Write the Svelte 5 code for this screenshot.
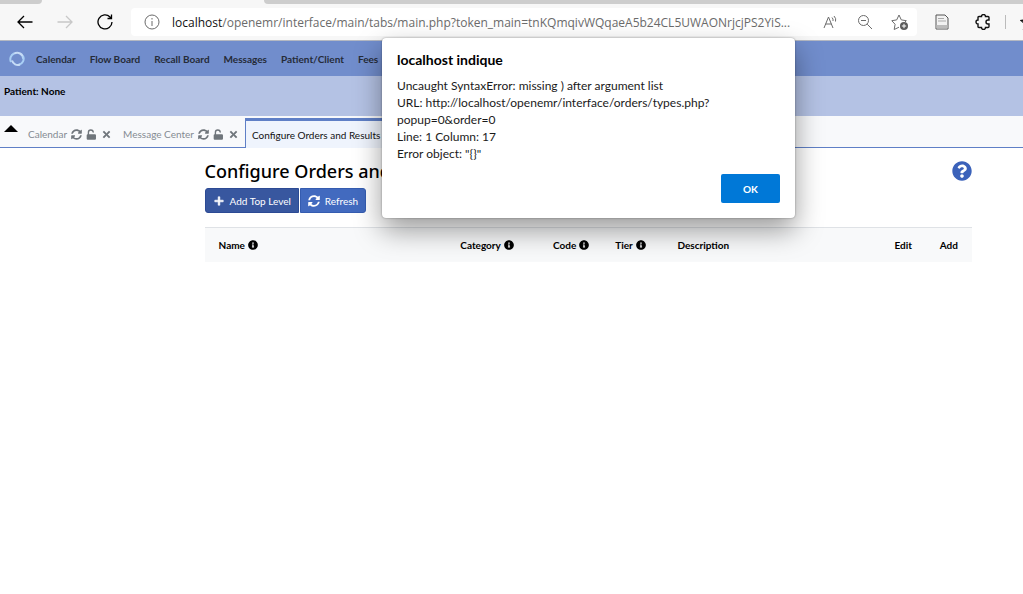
<script lang="ts">
    const menu = ['Calendar', 'Flow Board', 'Recall Board', 'Messages', 'Patient/Client', 'Fees'];

    const columns = [
        { title: 'Name', info: true, width: 31.5 },
        { title: 'Category', info: true, width: 12.1 },
        { title: 'Code', info: true, width: 8.1 },
        { title: 'Tier', info: true, width: 8.1 },
        { title: 'Description', info: false, width: 28.3 },
        { title: 'Edit', info: false, width: 5.9 },
        { title: 'Add', info: false, width: 6 }
    ];

    let tabs = $state([
        { title: 'Calendar', active: false },
        { title: 'Message Center', active: false },
        { title: 'Configure Orders and Results', active: true }
    ]);

    let showAlert = $state(true);

    function closeTab(title: string) {
        tabs = tabs.filter((t) => t.title !== title);
    }
</script>

{#snippet sync()}
    <svg class="fa" viewBox="0 0 512 512" aria-hidden="true"><path d="M370.72 133.28C339.458 104.008 298.888 87.962 255.848 88c-77.458.068-144.328 53.178-162.791 126.85-1.344 5.363-6.122 9.15-11.651 9.15H24.103c-7.498 0-13.194-6.807-11.807-14.176C33.933 94.924 134.813 8 256 8c66.448 0 126.791 26.136 171.315 68.685L463.03 40.97C478.149 25.851 504 36.559 504 57.941V192c0 13.255-10.745 24-24 24H345.941c-21.382 0-32.09-25.851-16.971-40.971l41.75-41.749zM32 296h134.059c21.382 0 32.09 25.851 16.971 40.971l-41.75 41.75c31.262 29.273 71.835 45.319 114.876 45.28 77.418-.07 144.315-53.144 162.787-126.849 1.344-5.363 6.122-9.15 11.651-9.15h57.304c7.498 0 13.194 6.807 11.807 14.176C478.067 417.076 377.187 504 256 504c-66.448 0-126.791-26.136-171.315-68.685L48.97 471.03C33.851 486.149 8 475.441 8 454.059V320c0-13.255 10.745-24 24-24z" /></svg>
{/snippet}

{#snippet info()}
    <svg class="fa info" viewBox="0 0 512 512" aria-hidden="true"><path d="M256 8C119.043 8 8 119.083 8 256c0 136.997 111.043 248 248 248s248-111.003 248-248C504 119.083 392.957 8 256 8zm0 110c23.196 0 42 18.804 42 42s-18.804 42-42 42-42-18.804-42-42 18.804-42 42-42zm56 254c0 6.627-5.373 12-12 12h-88c-6.627 0-12-5.373-12-12v-24c0-6.627 5.373-12 12-12h12v-64h-12c-6.627 0-12-5.373-12-12v-24c0-6.627 5.373-12 12-12h64c6.627 0 12 5.373 12 12v100h12c6.627 0 12 5.373 12 12v24z" /></svg>
{/snippet}

<div class="strip"><span class="strip-tab"></span><span class="strip-active"></span><span class="strip-rest"></span></div>

<header class="toolbar">
    <div class="nav-buttons">
        <button aria-label="Back"><svg width="16" height="16" viewBox="0 0 16 16"><path d="M15.500 8H1M7 2 1 8l6 6" /></svg></button>
        <button aria-label="Forward" disabled><svg width="16" height="16" viewBox="0 0 16 16"><path d="M.5 8H15M9 2l6 6-6 6" /></svg></button>
        <button aria-label="Reload"><svg width="16" height="16" viewBox="0 0 16 16"><path d="M15 8a7 7 0 1 1-2-5l1.500 1.500M14.500.5v4h-4" /></svg></button>
    </div>
    <div class="address">
        <svg width="16" height="16" viewBox="0 0 16 16"><circle cx="8" cy="8" r="7" /><path d="M8 7v5M8 4v1.500" /></svg>
        <a class="url" href="#main"><b>localhost</b>/openemr/interface/main/tabs/main.php?token_main=tnKQmqivWQqaeA5b24CL5UWAONrjcjPS2YiS...</a>
        <button aria-label="Read aloud"><svg width="16" height="16" viewBox="0 0 16 16"><path d="M1 14 5.500 3 10 14M2.600 10h5.800M9 3.500q1.500 1.500 1 3.500M11 2q2.500 2.500 1.500 5.500" /></svg></button>
        <button aria-label="Zoom out"><svg width="16" height="16" viewBox="0 0 16 16"><circle cx="6.500" cy="6.500" r="5" /><path d="M4 6.500h5M10.200 10.200 15 15" /></svg></button>
        <button aria-label="Add to favourites"><svg width="18" height="18" viewBox="0 0 18 18"><path d="M8 14.200 3.200 16.500l.9-5.200L.8 7.700l4.900-.8L8 2l2.300 4.900 5 .8-1.500 1.500" /><circle class="solid" cx="13" cy="13" r="4" /><path class="light" d="M13 10.800v4.400M10.800 13h4.400" /></svg></button>
    </div>
    <div class="extras">
        <button aria-label="Page extension"><svg width="16" height="16" viewBox="0 0 16 16"><path class="page" d="M2 1h9l3 3v11H2z" /><path class="line" d="M4 4.500h6M4 7h8" /><path class="band" d="M2.500 11h11v3.500h-11z" /></svg></button>
        <button class="puzzle" aria-label="Extensions"><svg width="16" height="16" viewBox="0 0 16 16"><path d="M4 2.500h2.500a2 2 0 0 1 4 0H13q1 0 1 1V6h-1a2 2 0 0 0 0 4h1v2.500q0 1-1 1h-2.500a2 2 0 0 1-4 0H4q-1 0-1-1V10a2 2 0 0 1 0-4V3.500q0-1 1-1z" /></svg></button>
        <span class="rule"></span>
        <button class="puzzle" aria-label="Favourites"><svg width="16" height="16" viewBox="0 0 16 16"><path d="M8 1.500 10 6l5 .5-4 3.300 1.200 4.900L8 12l-4.200 2.700L5 9.800 1 6.500 6 6z" /></svg></button>
    </div>
</header>

<nav class="menu">
    <svg class="logo" width="16" height="16" viewBox="0 0 16 16" aria-hidden="true">
        <path class="arc-one" d="M2 11A6.200 6.200 0 0 1 5 2.500" />
        <path class="arc-two" d="M5 2.700a6 6 0 0 1 9.200 5" />
        <path class="arc-one" d="M14 5a6.200 6.200 0 0 1-4 8.700" />
        <path class="arc-two" d="M3 9.500a6 6 0 0 0 8 4" />
    </svg>
    {#each menu as item}
        <a href="#menu">{item}</a>
    {/each}
</nav>

<section class="patient">Patient: None</section>

<div class="tabs">
    <button class="collapse" aria-label="Collapse patient bar"></button>
    {#each tabs as tab}
        <div class="tab" class:active={tab.active}>
            <a href="#tab">{tab.title}</a>
            <button aria-label="Refresh {tab.title}">{@render sync()}</button>
            <button aria-label="Lock {tab.title}"><svg class="fa" viewBox="0 0 512 512" aria-hidden="true"><path d="M80 240V160a144 144 0 0 1 288-6c0 30-64 30-64 0a80 80 0 0 0-160 6v80h272a48 48 0 0 1 48 48v160a48 48 0 0 1-48 48H80a48 48 0 0 1-48-48V288a48 48 0 0 1 48-48z" /></svg></button>
            <button aria-label="Close {tab.title}" onclick={() => closeTab(tab.title)}><svg class="fa" viewBox="0 0 512 512" aria-hidden="true"><path d="m140 90 116 116L372 90l50 50-116 116 116 116-50 50-116-116-116 116-50-50 116-116L90 140z" stroke="currentColor" stroke-width="24" /></svg></button>
        </div>
    {/each}
</div>

<main id="main">
    <div class="title">
        <h1>Configure Orders and Results</h1>
        <a class="help" href="#help" aria-label="Help"><svg viewBox="0 0 512 512" width="20" height="20"><path d="M504 256c0 136.997-111.043 248-248 248S8 392.997 8 256C8 119.083 119.043 8 256 8s248 111.083 248 248zM262.655 90c-54.497 0-89.255 22.957-116.549 63.758-3.536 5.286-2.353 12.415 2.715 16.258l34.699 26.31c5.205 3.947 12.621 3.008 16.665-2.122 17.864-22.658 30.113-35.797 57.303-35.797 20.429 0 45.698 13.148 45.698 32.958 0 14.976-12.363 22.667-32.534 33.976C247.128 238.528 216 254.941 216 296v4c0 6.627 5.373 12 12 12h56c6.627 0 12-5.373 12-12v-1.333c0-28.462 83.186-29.647 83.186-106.667 0-58.002-60.165-102-116.531-102zM256 338c-25.365 0-46 20.635-46 46 0 25.364 20.635 46 46 46s46-20.636 46-46c0-25.365-20.635-46-46-46z" /></svg></a>
    </div>
    <div class="actions">
        <button class="pressed"><svg class="fa" viewBox="0 0 512 512" aria-hidden="true"><path d="M220 76h72v144h144v72H292v144h-72V292H76v-72h144z" stroke="currentColor" stroke-width="24" stroke-linejoin="round" /></svg>Add Top Level</button>
        <button>{@render sync()}Refresh</button>
    </div>
    <table>
        <colgroup>
            {#each columns as col}
                <col style="width: {col.width}%" />
            {/each}
        </colgroup>
        <thead>
            <tr>
                {#each columns as col}
                    <th scope="col">{col.title}{#if col.info}{@render info()}{/if}</th>
                {/each}
            </tr>
        </thead>
    </table>
</main>

{#if showAlert}
    <div class="alert" role="alertdialog" aria-labelledby="alert-title" aria-describedby="alert-text">
        <h2 id="alert-title">localhost indique</h2>
        <p id="alert-text">Uncaught SyntaxError: missing ) after argument list<br />URL: http://localhost/openemr/interface/orders/types.php?<br />popup=0&amp;order=0<br />Line: 1 Column: 17<br />Error object: "{'{}'}"</p>
        <button onclick={() => (showAlert = false)}>OK</button>
    </div>
{/if}

<style>
    :global(body) {
        background: #fff;
        color: #000;
        font-family: "Segoe UI", Lato, "Open Sans", sans-serif;
        font-size: 10px;
        overflow-x: hidden;
    }
    button {
        border: 0;
        padding: 0;
        background: none;
        color: inherit;
        font: inherit;
        display: flex;
        align-items: center;
    }
    a {
        color: inherit;
        text-decoration: none;
    }
    svg {
        flex: none;
        display: block;
    }
    .fa {
        width: 12px;
        height: 12px;
        fill: currentColor;
    }

    /* browser chrome */
    .strip {
        display: flex;
        height: 4px;
        background: #f7f7f7;
    }
    .strip-tab {
        width: 42px;
        background: #cdcdcd;
        border-radius: 0 0 4px 0;
    }
    .strip-active {
        width: 222px;
    }
    .strip-rest {
        flex: 1;
        background: #cdcdcd;
        border-radius: 0 0 0 4px;
    }
    .toolbar {
        display: flex;
        align-items: center;
        height: 36px;
        background: #f7f7f7;
        border-bottom: 1px solid #b4b8c2;
        overflow: hidden;
    }
    .toolbar svg {
        fill: none;
        stroke: currentColor;
    }
    .nav-buttons {
        display: flex;
        gap: 24px;
        padding: 0 18px 0 17px;
    }
    .nav-buttons svg {
        stroke-width: 1.3;
    }
    .nav-buttons button:disabled {
        color: #c8c8c8;
    }
    .address {
        flex: 1;
        min-width: 0;
        display: flex;
        align-items: center;
        gap: 18px;
        height: 28px;
        padding: 0 8px 0 13px;
        background: #fff;
        border-radius: 4px;
        color: #6b6b6b;
    }
    .url {
        flex: 1;
        min-width: 0;
        margin-left: -6px;
        overflow: hidden;
        white-space: nowrap;
        font-family: "Segoe UI", "Open Sans", sans-serif;
        font-size: 12px;
    }
    .url b {
        color: #111;
        font-weight: 400;
    }
    .address .solid {
        fill: #5a5a5a;
        stroke: none;
    }
    .address .light {
        stroke: #fff;
    }
    .extras {
        display: flex;
        align-items: center;
        width: 89px;
        margin-left: 17px;
        gap: 25px;
        color: #555;
    }
    .extras .page {
        fill: #f2f2f2;
    }
    .extras .line {
        stroke: #aaa;
    }
    .extras .band {
        fill: #bbb;
        stroke: none;
    }
    .puzzle {
        color: #111;
    }
    .puzzle svg {
        stroke-width: 1.4;
    }
    .rule {
        flex: none;
        width: 1px;
        height: 14px;
        margin: 0 -11px;
        background: #bbb;
    }

    /* application */
    .menu {
        display: flex;
        align-items: center;
        gap: 14px;
        height: 35px;
        padding-left: 9px;
        background: #718dcc;
        color: #252b38;
        font-weight: 700;
    }
    .logo {
        margin-right: -3px;
        fill: none;
        stroke-width: 2;
    }
    .arc-one {
        stroke: #a9cff5;
    }
    .arc-two {
        stroke: #c6dcf6;
    }
    .patient {
        height: 40px;
        padding: 8px 4px 0;
        box-sizing: border-box;
        background: #b4c2e4;
        font-weight: 700;
        line-height: 14px;
    }
    .tabs {
        display: flex;
        align-items: stretch;
        height: 32px;
        background: #f8f9fb;
        box-shadow: inset 0 -1px #5f7fc6;
    }
    .collapse {
        width: 0;
        height: 0;
        margin: 9px 5px 0 4px;
        border: 7px solid transparent;
        border-top: 0;
        border-bottom-color: #000;
    }
    .tab {
        display: flex;
        align-items: center;
        gap: 4px;
        padding: 4px 6px 0 5px;
        color: #858b92;
        white-space: nowrap;
    }
    .tab .fa {
        width: 11px;
        height: 11px;
        color: #6f757b;
    }
    .tab.active {
        padding: 0 6px;
        margin-top: 2px;
        border-top: 3px solid #5f7fc6;
        border-left: 1px solid #5f7fc6;
        background: #eff4fd;
        color: #111;
    }
    main {
        margin: 0 5% 0 20%;
        padding-top: 9px;
    }
    .title {
        display: flex;
        align-items: center;
        justify-content: space-between;
        height: 28px;
    }
    h1 {
        margin: 0;
        font-family: "Segoe UI", "Noto Sans", sans-serif;
        font-size: 18px;
        font-weight: 500;
        line-height: 28px;
    }
    .help svg {
        fill: #3b62ba;
    }
    .actions {
        display: flex;
        gap: 1px;
        margin: 3px 0 14px;
    }
    .actions button {
        gap: 5px;
        height: 25px;
        padding: 0 7px;
        background: #426abf;
        border: 1px solid #355cb0;
        border-radius: 0 3px 3px 0;
        color: #fff;
    }
    .actions .pressed {
        background: #38579f;
        border-color: #2c4a94;
        border-radius: 3px 0 0 3px;
    }
    table {
        width: 100%;
        table-layout: fixed;
        border-collapse: collapse;
        background: #f8f9fa;
        border-top: 1px solid #dfe2e6;
    }
    th {
        height: 34px;
        padding: 0 0 0 14px;
        text-align: left;
        white-space: nowrap;
        font-weight: 700;
    }
    .info {
        display: inline-block;
        width: 10px;
        height: 10px;
        margin-left: 3px;
        vertical-align: -1px;
    }

    /* browser alert, drawn over the page */
    .alert {
        position: absolute;
        top: 38px;
        left: 382px;
        width: 413px;
        box-sizing: border-box;
        display: flex;
        flex-direction: column;
        padding: 12px 15px 15px;
        background: #fff;
        border-radius: 4px;
        box-shadow: 0 0 2px rgba(0, 0, 0, 0.4), 0 12px 28px rgba(0, 0, 0, 0.4);
    }
    .alert h2 {
        margin: 0 0 7px;
        font-size: 14px;
        font-weight: 700;
        line-height: 20px;
    }
    .alert p {
        margin: 0 0 12px;
        font-size: 12px;
        line-height: 17px;
        color: #1a1a1a;
    }
    .alert button {
        align-self: flex-end;
        justify-content: center;
        width: 59px;
        height: 29px;
        background: #0078d7;
        border-radius: 2px;
        color: #fff;
        font-weight: 700;
    }
</style>
